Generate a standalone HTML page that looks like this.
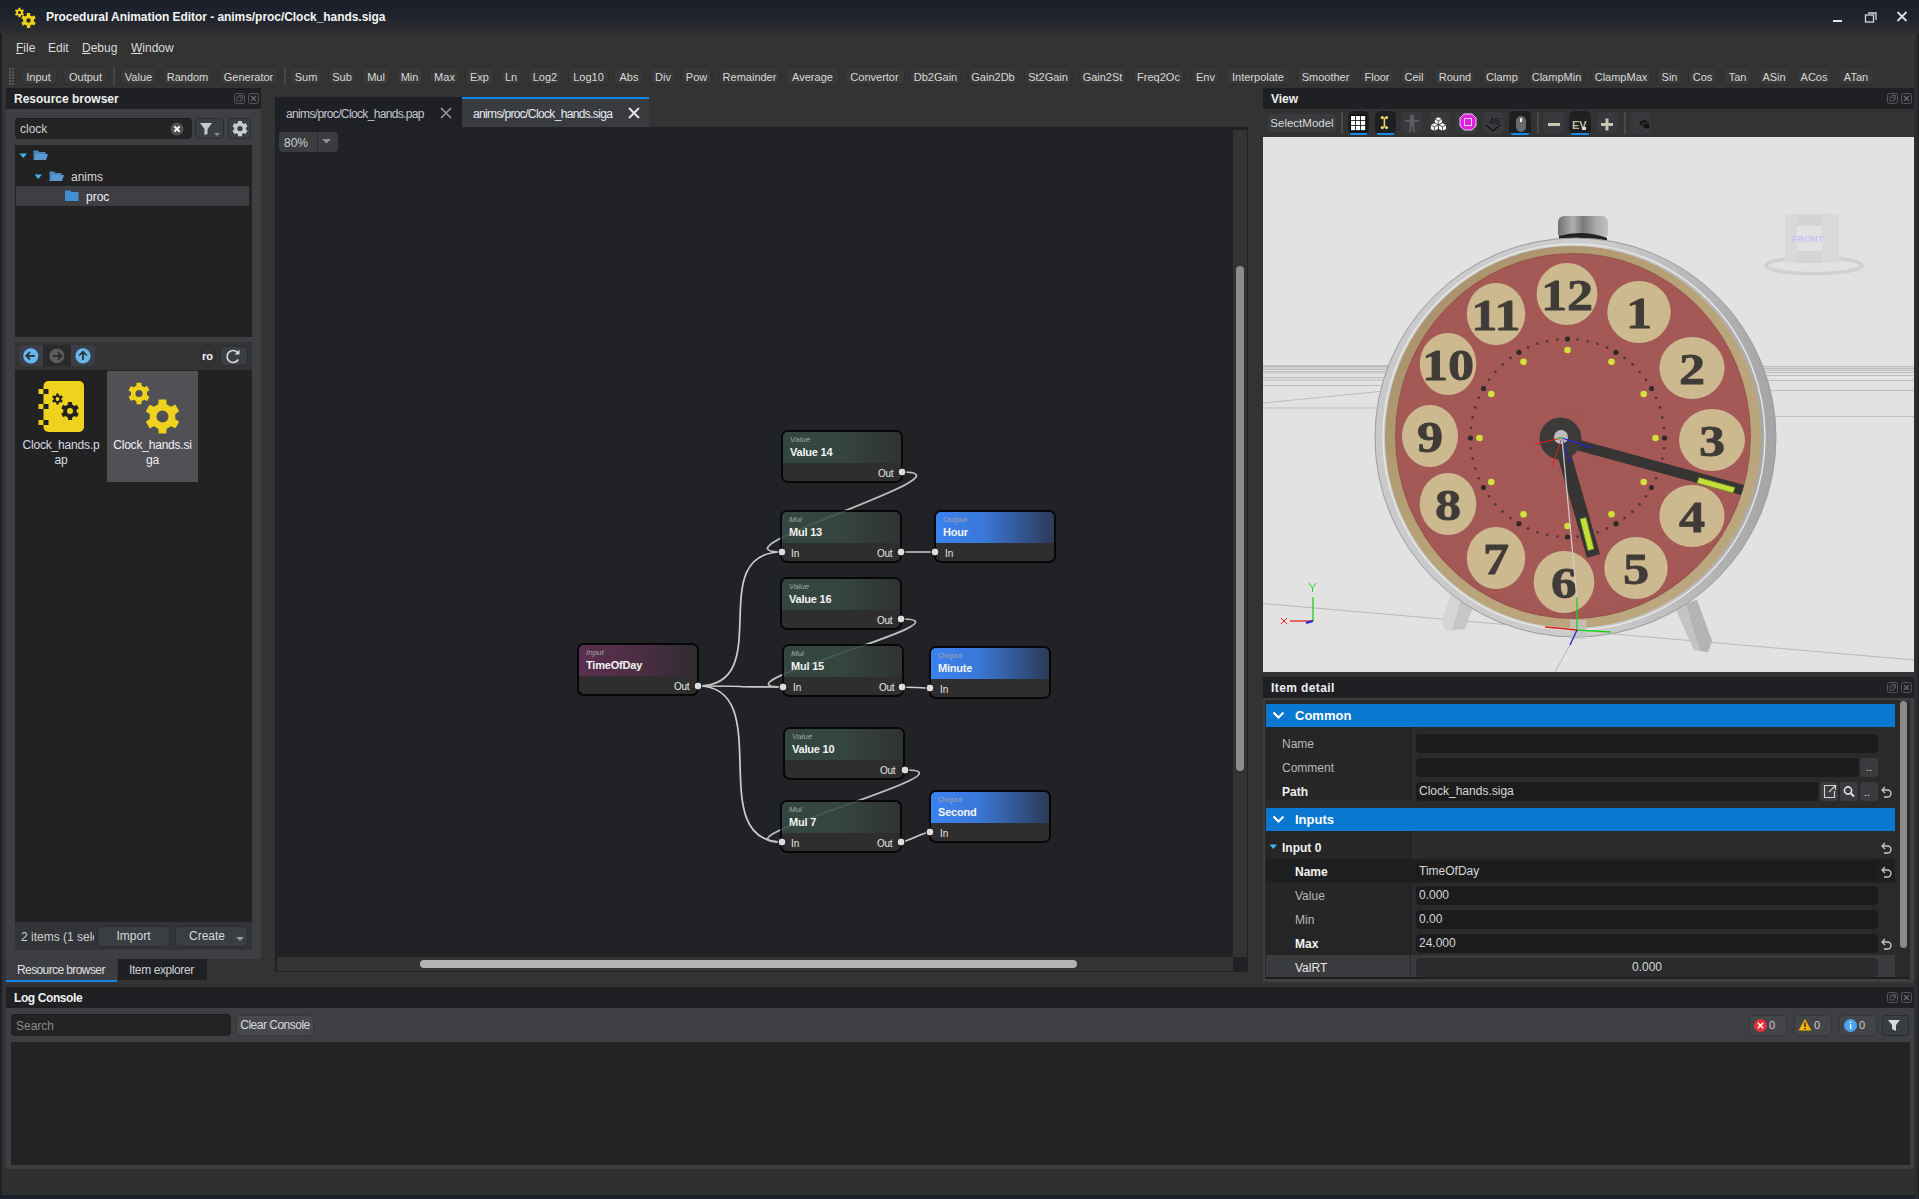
<!DOCTYPE html>
<html><head><meta charset="utf-8"><style>
*{box-sizing:border-box;margin:0;padding:0}
html,body{width:1919px;height:1199px;overflow:hidden;background:#333333;font-family:"Liberation Sans",sans-serif;font-size:12px;color:#d8d8d8}
.a{position:absolute}
.tbtn{position:absolute;top:67px;height:18px;border:1px solid #2e2e2e;border-radius:5px;background:#383838;color:#d9d9d9;font-size:11px;line-height:18px;text-align:center;white-space:nowrap;overflow:hidden}
</style></head><body>
<div class="a" style="left:0;top:0;width:1919px;height:33px;background:linear-gradient(180deg,#1b1f2a 0%,#1f232d 45%,#2c2d2e 100%)"></div>
<svg class="a" style="left:0;top:0" width="40" height="33"><path fill-rule="evenodd" fill="#f1d21b" d="M22.84,13.16 L24.09,13.92 L23.04,15.74 L21.76,15.04 L20.60,15.72 L20.56,17.18 L18.47,17.19 L18.43,15.73 L17.26,15.06 L15.98,15.76 L14.92,13.95 L16.17,13.18 L16.16,11.84 L14.91,11.08 L15.96,9.26 L17.24,9.96 L18.40,9.28 L18.44,7.82 L20.53,7.81 L20.57,9.27 L21.74,9.94 L23.02,9.24 L24.08,11.05 L22.83,11.82Z M21.00,12.50 A1.5,1.5 0 1 0 18.00,12.50 A1.5,1.5 0 1 0 21.00,12.50Z M33.80,21.55 L35.76,22.75 L34.11,25.62 L32.09,24.54 L30.24,25.61 L30.18,27.91 L26.87,27.92 L26.80,25.62 L24.94,24.56 L22.92,25.66 L21.26,22.80 L23.21,21.59 L23.20,19.45 L21.24,18.25 L22.89,15.38 L24.91,16.46 L26.76,15.39 L26.82,13.09 L30.13,13.08 L30.20,15.38 L32.06,16.44 L34.08,15.34 L35.74,18.20 L33.79,19.41Z M30.70,20.50 A2.2,2.2 0 1 0 26.30,20.50 A2.2,2.2 0 1 0 30.70,20.50Z"/></svg>
<div class="a" style="left:46px;top:10px;font-weight:bold;font-size:12px;color:#f4f4f4;white-space:nowrap;letter-spacing:-0.05px">Procedural Animation Editor - anims/proc/Clock_hands.siga</div>
<svg class="a" style="left:1826px;top:8px" width="85" height="20"><rect x="7" y="12" width="9" height="2" fill="#e8e8e8"/><rect x="39.5" y="7" width="8" height="7" fill="none" stroke="#d8d8d8" stroke-width="1.3"/><path d="M42,5 H50 V12" fill="none" stroke="#d8d8d8" stroke-width="1.3"/><path d="M71.5,4 L80.5,13 M80.5,4 L71.5,13" stroke="#e0e0e0" stroke-width="1.8"/></svg>
<div class="a" style="left:0;top:33px;width:2px;height:1166px;background:#1b202a"></div>
<div class="a" style="left:16px;top:41px;color:#dcdcdc;font-size:12px;white-space:nowrap"><u>F</u>ile</div>
<div class="a" style="left:48px;top:41px;color:#dcdcdc;font-size:12px;white-space:nowrap">Edit</div>
<div class="a" style="left:82px;top:41px;color:#dcdcdc;font-size:12px;white-space:nowrap"><u>D</u>ebug</div>
<div class="a" style="left:131px;top:41px;color:#dcdcdc;font-size:12px;white-space:nowrap"><u>W</u>indow</div>
<svg class="a" style="left:8px;top:67px" width="8" height="19"><rect x="1" y="1" width="2" height="2" fill="#5a5a5a"/><rect x="4" y="1" width="2" height="2" fill="#5a5a5a"/><rect x="1" y="4" width="2" height="2" fill="#5a5a5a"/><rect x="4" y="4" width="2" height="2" fill="#5a5a5a"/><rect x="1" y="7" width="2" height="2" fill="#5a5a5a"/><rect x="4" y="7" width="2" height="2" fill="#5a5a5a"/><rect x="1" y="10" width="2" height="2" fill="#5a5a5a"/><rect x="4" y="10" width="2" height="2" fill="#5a5a5a"/><rect x="1" y="13" width="2" height="2" fill="#5a5a5a"/><rect x="4" y="13" width="2" height="2" fill="#5a5a5a"/><rect x="1" y="16" width="2" height="2" fill="#5a5a5a"/><rect x="4" y="16" width="2" height="2" fill="#5a5a5a"/></svg>
<div class="tbtn" style="left:20px;width:37px">Input</div>
<div class="tbtn" style="left:63px;width:45px">Output</div>
<div class="tbtn" style="left:120px;width:37px">Value</div>
<div class="tbtn" style="left:163px;width:49px">Random</div>
<div class="tbtn" style="left:219px;width:59px">Generator</div>
<div class="tbtn" style="left:290px;width:32px">Sum</div>
<div class="tbtn" style="left:328px;width:28px">Sub</div>
<div class="tbtn" style="left:362px;width:28px">Mul</div>
<div class="tbtn" style="left:396px;width:27px">Min</div>
<div class="tbtn" style="left:429px;width:31px">Max</div>
<div class="tbtn" style="left:465px;width:29px">Exp</div>
<div class="tbtn" style="left:500px;width:22px">Ln</div>
<div class="tbtn" style="left:528px;width:34px">Log2</div>
<div class="tbtn" style="left:568px;width:41px">Log10</div>
<div class="tbtn" style="left:614px;width:30px">Abs</div>
<div class="tbtn" style="left:650px;width:26px">Div</div>
<div class="tbtn" style="left:681px;width:31px">Pow</div>
<div class="tbtn" style="left:719px;width:61px">Remainder</div>
<div class="tbtn" style="left:786px;width:53px">Average</div>
<div class="tbtn" style="left:844px;width:61px">Convertor</div>
<div class="tbtn" style="left:910px;width:51px">Db2Gain</div>
<div class="tbtn" style="left:968px;width:50px">Gain2Db</div>
<div class="tbtn" style="left:1024px;width:48px">St2Gain</div>
<div class="tbtn" style="left:1079px;width:47px">Gain2St</div>
<div class="tbtn" style="left:1133px;width:51px">Freq2Oc</div>
<div class="tbtn" style="left:1191px;width:29px">Env</div>
<div class="tbtn" style="left:1226px;width:64px">Interpolate</div>
<div class="tbtn" style="left:1297px;width:57px">Smoother</div>
<div class="tbtn" style="left:1360px;width:34px">Floor</div>
<div class="tbtn" style="left:1400px;width:28px">Ceil</div>
<div class="tbtn" style="left:1434px;width:42px">Round</div>
<div class="tbtn" style="left:1482px;width:40px">Clamp</div>
<div class="tbtn" style="left:1529px;width:55px">ClampMin</div>
<div class="tbtn" style="left:1591px;width:60px">ClampMax</div>
<div class="tbtn" style="left:1657px;width:25px">Sin</div>
<div class="tbtn" style="left:1688px;width:29px">Cos</div>
<div class="tbtn" style="left:1723px;width:29px">Tan</div>
<div class="tbtn" style="left:1758px;width:32px">ASin</div>
<div class="tbtn" style="left:1796px;width:36px">ACos</div>
<div class="tbtn" style="left:1838px;width:36px">ATan</div>
<div class="a" style="left:113px;top:67px;width:2px;height:19px;background:#464646"></div>
<div class="a" style="left:284px;top:67px;width:2px;height:19px;background:#464646"></div>
<div class="a" style="left:6px;top:88px;width:255px;height:21px;background:#1f2024"></div>
<div class="a" style="left:14px;top:92px;font-weight:bold;color:#f0f0f0;font-size:12px">Resource browser</div>
<svg class="a" style="left:234px;top:93px" width="26" height="12"><rect x="0.5" y="0.5" width="10" height="10" rx="2" fill="none" stroke="#55575c"/><rect x="3" y="4" width="4" height="4" fill="none" stroke="#55575c"/><path d="M4.5,2.5 H8.5 V6.5" fill="none" stroke="#55575c"/><rect x="14.5" y="0.5" width="10" height="10" rx="2" fill="none" stroke="#55575c"/><path d="M17,3 L22,8 M22,3 L17,8" stroke="#606268" stroke-width="1.6"/></svg>
<div class="a" style="left:6px;top:109px;width:255px;height:850px;background:#3e3f43"></div>
<div class="a" style="left:15px;top:118px;width:177px;height:21px;background:#232323;border-radius:4px;border-top:1px solid #1a1a1a"></div>
<div class="a" style="left:20px;top:122px;color:#d0d0d0;font-size:12px">clock</div>
<svg class="a" style="left:170px;top:122px" width="14" height="14"><circle cx="7" cy="7" r="6.5" fill="#505050"/><path d="M4.4,4.4 L9.6,9.6 M9.6,4.4 L4.4,9.6" stroke="#ffffff" stroke-width="2"/></svg>
<div class="a" style="left:195px;top:118px;width:29px;height:21px;background:#3b3f44;border:1px solid #2a2c2f;border-radius:4px"></div>
<svg class="a" style="left:199px;top:121px" width="24" height="16"><path d="M1,2 H13 L8.5,8 V13 L5.5,14 V8 Z" fill="#c8cacc"/><path d="M15,12 h6 l-3,3z" fill="#8a8c8f"/></svg>
<div class="a" style="left:228px;top:118px;width:23px;height:21px;background:#3b3f44;border:1px solid #2a2c2f;border-radius:4px"></div>
<svg class="a" style="left:0;top:0" width="260" height="150"><path fill-rule="evenodd" fill="#c8ccd2" d="M245.83,129.50 L247.54,130.59 L245.54,134.10 L243.73,133.17 L242.13,134.10 L242.05,136.13 L238.01,136.14 L237.91,134.12 L236.30,133.20 L234.50,134.14 L232.47,130.65 L234.18,129.54 L234.17,127.70 L232.46,126.61 L234.46,123.10 L236.27,124.03 L237.87,123.10 L237.95,121.07 L241.99,121.06 L242.09,123.08 L243.70,124.00 L245.50,123.06 L247.53,126.55 L245.82,127.66Z M242.70,128.60 A2.7,2.7 0 1 0 237.30,128.60 A2.7,2.7 0 1 0 242.70,128.60Z"/></svg>
<div class="a" style="left:15px;top:145px;width:237px;height:192px;background:#222222"></div>
<div class="a" style="left:16px;top:186px;width:233px;height:20px;background:#3e3f43"></div>
<svg class="a" style="left:19px;top:153px" width="10" height="7"><path d="M0.5,0.5 H8 L4.25,5 Z" fill="#3fb4f0"/></svg>
<svg class="a" style="left:33px;top:149px" width="16" height="12"><path d="M0.5,1.5 h4.5 l1.5,1.5 h6 v2 h-10 l-2,6 z" fill="#4b88bd"/><path d="M2.5,5 H15 L13,11 H0.5 Z" fill="#5a9ad0"/></svg>
<svg class="a" style="left:34px;top:174px" width="10" height="7"><path d="M0.5,0.5 H8 L4.25,5 Z" fill="#3fb4f0"/></svg>
<svg class="a" style="left:49px;top:170px" width="16" height="12"><path d="M0.5,1.5 h4.5 l1.5,1.5 h6 v2 h-10 l-2,6 z" fill="#4b88bd"/><path d="M2.5,5 H15 L13,11 H0.5 Z" fill="#5a9ad0"/></svg>
<div class="a" style="left:71px;top:170px;color:#d6d6d6;font-size:12px">anims</div>
<svg class="a" style="left:65px;top:190px" width="15" height="12"><path d="M0,0.5 h5 l1.5,1.5 h7 v9 h-13.5z" fill="#3f8fd2"/></svg>
<div class="a" style="left:86px;top:190px;color:#f0f0f0;font-size:12px">proc</div>
<div class="a" style="left:15px;top:342px;width:237px;height:28px;background:#333333"></div>
<div class="a" style="left:19px;top:345px;width:76px;height:21px;background:#2a2a2a;border-radius:4px;overflow:hidden"><div class="a" style="left:0;top:0;width:24px;height:21px;background:#3a3f47"></div><div class="a" style="left:52px;top:0;width:24px;height:21px;background:#3a3f47"></div></div>
<svg class="a" style="left:19px;top:345px" width="80" height="21"><circle cx="11.8" cy="10.8" r="7.6" fill="#6ab6ec"/><path d="M15.8,10.8 H7.8 M11,7 L7.3,10.8 L11,14.6" fill="none" stroke="#2b2b2b" stroke-width="1.7"/><circle cx="37.9" cy="10.8" r="7.4" fill="#5c5c5c"/><path d="M34,10.8 H42 M38.8,7 L42.5,10.8 L38.8,14.6" fill="none" stroke="#262626" stroke-width="1.7"/><circle cx="64" cy="10.8" r="7.6" fill="#6ab6ec"/><path d="M64,15 V7 M60.2,10.5 L64,6.7 L67.8,10.5" fill="none" stroke="#2b2b2b" stroke-width="1.7"/></svg>
<div class="a" style="left:201px;top:346px;width:14px;height:20px;background:#353535;border-radius:7px;border:1px solid #2a2a2a"></div>
<div class="a" style="left:202px;top:350px;color:#f0f0f0;font-size:11px;font-weight:bold">ro</div>
<div class="a" style="left:220px;top:346px;width:28px;height:20px;background:#3b3e44;border-radius:4px;border:1px solid #2c2d30"></div>
<svg class="a" style="left:225px;top:347px" width="18" height="18"><path d="M12.6,5.5 A6,6 0 1 0 13.3,12.5" fill="none" stroke="#d4d6d8" stroke-width="1.7"/><path d="M9.5,7.5 H14.5 V2.5 Z" fill="#d4d6d8"/></svg>
<div class="a" style="left:15px;top:370px;width:237px;height:552px;background:#222222"></div>
<div class="a" style="left:107px;top:371px;width:91px;height:111px;background:#505055"></div>
<svg class="a" style="left:0;top:0" width="200" height="440"><rect x="43.5" y="381" width="40.5" height="51" rx="5" fill="#eed21d"/><rect x="38.5" y="389" width="5" height="5" fill="#eed21d"/><rect x="43.5" y="389" width="5" height="5" fill="#222222"/><rect x="38.5" y="404" width="5" height="5" fill="#eed21d"/><rect x="43.5" y="404" width="5" height="5" fill="#222222"/><rect x="38.5" y="420" width="5" height="5" fill="#eed21d"/><rect x="43.5" y="420" width="5" height="5" fill="#222222"/><path fill-rule="evenodd" fill="#222222" d="M61.42,399.78 L62.85,400.66 L61.64,402.78 L60.16,401.99 L58.79,402.79 L58.74,404.46 L56.30,404.47 L56.24,402.80 L54.87,402.01 L53.39,402.81 L52.16,400.69 L53.58,399.80 L53.58,398.22 L52.15,397.34 L53.36,395.22 L54.84,396.01 L56.21,395.21 L56.26,393.54 L58.70,393.53 L58.76,395.20 L60.13,395.99 L61.61,395.19 L62.84,397.31 L61.42,398.20Z M59.40,399.00 A1.9,1.9 0 1 0 55.60,399.00 A1.9,1.9 0 1 0 59.40,399.00Z M76.67,412.32 L78.79,413.72 L76.79,417.20 L74.52,416.08 L72.19,417.44 L72.04,419.97 L68.03,419.99 L67.85,417.45 L65.52,416.12 L63.25,417.25 L61.23,413.78 L63.34,412.37 L63.33,409.68 L61.21,408.28 L63.21,404.80 L65.48,405.92 L67.81,404.56 L67.96,402.03 L71.97,402.01 L72.15,404.55 L74.48,405.88 L76.75,404.75 L78.77,408.22 L76.66,409.63Z M73.00,411.00 A3.0,3.0 0 1 0 67.00,411.00 A3.0,3.0 0 1 0 73.00,411.00Z"/><path fill-rule="evenodd" fill="#eed21d" d="M147.04,395.09 L149.51,396.75 L147.12,400.92 L144.44,399.63 L141.64,401.26 L141.44,404.23 L136.64,404.24 L136.41,401.28 L133.60,399.67 L130.93,400.97 L128.52,396.83 L130.97,395.15 L130.96,391.91 L128.49,390.25 L130.88,386.08 L133.56,387.37 L136.36,385.74 L136.56,382.77 L141.36,382.76 L141.59,385.72 L144.40,387.33 L147.07,386.03 L149.48,390.17 L147.03,391.85Z M142.60,393.50 A3.6,3.6 0 1 0 135.40,393.50 A3.6,3.6 0 1 0 142.60,393.50Z M175.25,419.02 L179.22,421.67 L175.42,428.30 L171.13,426.22 L166.69,428.81 L166.38,433.56 L158.74,433.59 L158.40,428.84 L153.94,426.28 L149.66,428.39 L145.82,421.79 L149.77,419.12 L149.75,413.98 L145.78,411.33 L149.58,404.70 L153.87,406.78 L158.31,404.19 L158.62,399.44 L166.26,399.41 L166.60,404.16 L171.06,406.72 L175.34,404.61 L179.18,411.21 L175.23,413.88Z M168.50,416.50 A6,6 0 1 0 156.50,416.50 A6,6 0 1 0 168.50,416.50Z"/></svg>
<div class="a" style="left:15px;top:438px;width:92px;text-align:center;color:#d8dce6;font-size:12px;line-height:15px;letter-spacing:-0.2px">Clock_hands.p<br>ap</div>
<div class="a" style="left:107px;top:438px;width:91px;text-align:center;color:#f2f2f6;font-size:12px;line-height:15px;letter-spacing:-0.2px">Clock_hands.si<br>ga</div>
<div class="a" style="left:15px;top:922px;width:237px;height:28px;background:#333437"></div>
<div class="a" style="left:21px;top:930px;width:73px;overflow:hidden;white-space:nowrap;color:#d0d0d0;font-size:12px">2 items (1 selected)</div>
<div class="a" style="left:97px;top:926px;width:73px;height:21px;background:#3a3d42;border:1px solid #2b2c2f;border-radius:4px;text-align:center;line-height:19px;color:#d8d8d8;font-size:12px">Import</div>
<div class="a" style="left:175px;top:926px;width:73px;height:21px;background:#3a3d42;border:1px solid #2b2c2f;border-radius:4px;color:#d8d8d8;font-size:12px;line-height:19px;padding-left:13px">Create</div>
<svg class="a" style="left:236px;top:937px" width="9" height="5"><path d="M0,0 H8 L4,4Z" fill="#9a9ca0"/></svg>
<div class="a" style="left:6px;top:959px;width:111px;height:21px;background:#3c3d41"></div>
<div class="a" style="left:17px;top:963px;color:#e0e0e0;font-size:12px;letter-spacing:-0.6px;white-space:nowrap">Resource browser</div>
<div class="a" style="left:6px;top:980px;width:111px;height:2px;background:#0f84e0"></div>
<div class="a" style="left:118px;top:959px;width:89px;height:21px;background:#1f2024"></div>
<div class="a" style="left:129px;top:963px;color:#d0d0d0;font-size:12px;letter-spacing:-0.4px;white-space:nowrap">Item explorer</div>
<div class="a" style="left:275px;top:97px;width:187px;height:30px;background:#1f2024"></div>
<div class="a" style="left:286px;top:107px;color:#c4c8d0;font-size:12px;white-space:nowrap;letter-spacing:-0.65px">anims/proc/Clock_hands.pap</div>
<svg class="a" style="left:440px;top:107px" width="12" height="12"><path d="M1,1 L11,11 M11,1 L1,11" stroke="#9a9a9a" stroke-width="1.6"/></svg>
<div class="a" style="left:462px;top:97px;width:187px;height:30px;background:#3a3b3f;border-top:2px solid #0f86e4"></div>
<div class="a" style="left:473px;top:107px;color:#e8ecf4;font-size:12px;white-space:nowrap;letter-spacing:-0.65px">anims/proc/Clock_hands.siga</div>
<svg class="a" style="left:628px;top:107px" width="12" height="12"><path d="M1,1 L11,11 M11,1 L1,11" stroke="#e8e8e8" stroke-width="1.8"/></svg>
<div class="a" style="left:275px;top:127px;width:973px;height:845px;background:#212226"></div>
<div class="a" style="left:279px;top:132px;width:59px;height:20px;background:#3a3c40;border-radius:4px"></div>
<div class="a" style="left:317px;top:132px;width:1px;height:20px;background:#2a2b2e"></div>
<div class="a" style="left:284px;top:136px;color:#d0d0d0;font-size:12px">80%</div>
<svg class="a" style="left:322px;top:139px" width="10" height="6"><path d="M0,0 H9 L4.5,4.5Z" fill="#8d8f93"/></svg>
<div class="a" style="left:1233px;top:130px;width:14px;height:827px;background:#333333"></div>
<div class="a" style="left:1236px;top:266px;width:8px;height:505px;background:#8c8c8c;border-radius:4px"></div>
<div class="a" style="left:277px;top:957px;width:956px;height:14px;background:#333333"></div>
<div class="a" style="left:420px;top:960px;width:657px;height:8px;background:#b4b4b4;border-radius:4px"></div>
<div class="a" style="left:1263px;top:88px;width:651px;height:21px;background:#1f2024"></div>
<div class="a" style="left:1271px;top:92px;font-weight:bold;color:#f0f0f0;font-size:12px">View</div>
<svg class="a" style="left:1887px;top:93px" width="26" height="12"><rect x="0.5" y="0.5" width="10" height="10" rx="2" fill="none" stroke="#55575c"/><rect x="3" y="4" width="4" height="4" fill="none" stroke="#55575c"/><path d="M4.5,2.5 H8.5 V6.5" fill="none" stroke="#55575c"/><rect x="14.5" y="0.5" width="10" height="10" rx="2" fill="none" stroke="#55575c"/><path d="M17,3 L22,8 M22,3 L17,8" stroke="#606268" stroke-width="1.6"/></svg>
<div class="a" style="left:1263px;top:109px;width:651px;height:28px;background:#333333"></div>
<div class="a" style="left:1268px;top:114px;width:68px;height:18px;background:#3a3b3e;border-radius:5px;color:#dadada;font-size:11.5px;line-height:18px;text-align:center">SelectModel</div>
<div class="a" style="left:1341px;top:112px;width:2px;height:22px;background:#4a4a4a"></div>
<div class="a" style="left:1537px;top:112px;width:2px;height:22px;background:#4a4a4a"></div>
<div class="a" style="left:1624px;top:112px;width:2px;height:22px;background:#4a4a4a"></div>
<div class="a" style="left:1348px;top:111px;width:21px;height:23px;background:#1e1f21;border-radius:5px"></div><div class="a" style="left:1350px;top:133px;width:17px;height:2px;background:#1a8ae8;border-radius:1px"></div>
<div class="a" style="left:1375px;top:111px;width:21px;height:23px;background:#1e1f21;border-radius:5px"></div><div class="a" style="left:1377px;top:133px;width:17px;height:2px;background:#1a8ae8;border-radius:1px"></div>
<div class="a" style="left:1402px;top:112px;width:21px;height:22px;background:#38393c;border-radius:5px"></div>
<div class="a" style="left:1429px;top:112px;width:21px;height:22px;background:#38393c;border-radius:5px"></div>
<div class="a" style="left:1456px;top:112px;width:21px;height:22px;background:#38393c;border-radius:5px"></div>
<div class="a" style="left:1483px;top:112px;width:21px;height:22px;background:#38393c;border-radius:5px"></div>
<div class="a" style="left:1509px;top:111px;width:22px;height:23px;background:#1e1f21;border-radius:5px"></div><div class="a" style="left:1511px;top:133px;width:18px;height:2px;background:#1a8ae8;border-radius:1px"></div>
<div class="a" style="left:1543px;top:112px;width:21px;height:22px;background:#38393c;border-radius:5px"></div>
<div class="a" style="left:1569px;top:111px;width:22px;height:23px;background:#1e1f21;border-radius:5px"></div><div class="a" style="left:1571px;top:133px;width:18px;height:2px;background:#1a8ae8;border-radius:1px"></div>
<div class="a" style="left:1597px;top:112px;width:21px;height:22px;background:#38393c;border-radius:5px"></div>
<div class="a" style="left:1630px;top:112px;width:21px;height:22px;background:#38393c;border-radius:5px"></div>
<svg class="a" style="left:1340px;top:108px" width="320" height="30"><rect x="10" y="7" width="16.5" height="16.5" rx="1.5" fill="#050505"/><rect x="11" y="8" width="4.2" height="4.2" fill="#ffffff"/><rect x="16" y="8" width="4.2" height="4.2" fill="#ffffff"/><rect x="21" y="8" width="4.2" height="4.2" fill="#ffffff"/><rect x="11" y="13" width="4.2" height="4.2" fill="#ffffff"/><rect x="16" y="13" width="4.2" height="4.2" fill="#ffffff"/><rect x="21" y="13" width="4.2" height="4.2" fill="#ffffff"/><rect x="11" y="18" width="4.2" height="4.2" fill="#ffffff"/><rect x="16" y="18" width="4.2" height="4.2" fill="#ffffff"/><rect x="21" y="18" width="4.2" height="4.2" fill="#ffffff"/><path d="M44.4,9.5 V19.5" stroke="#e8d070" stroke-width="1.6"/><circle cx="42.3" cy="9.6" r="1.6" fill="#e8d070"/><circle cx="46.5" cy="9.6" r="1.6" fill="#e8d070"/><circle cx="42.3" cy="19.6" r="1.6" fill="#e8d070"/><circle cx="46.5" cy="19.6" r="1.6" fill="#e8d070"/><circle cx="71.9" cy="8.8" r="2.2" fill="#5e5e5e"/><path d="M65,13 H79" stroke="#5e5e5e" stroke-width="1.8"/><rect x="69.6" y="10.5" width="4.6" height="8" fill="#5e5e5e"/><path d="M70.3,18 V23 M73.5,18 V23 M68.5,23 H71 M72.8,23 H75.3" stroke="#5e5e5e" stroke-width="1.6"/><path d="M98.4,8.8 L102.4,10.8 V15.3 L98.4,17.3 L94.4,15.3 V10.8 Z" fill="#f4f4f4" stroke="#1a1a1a" stroke-width="0.7"/><path d="M94.4,10.8 L98.4,12.8 L102.4,10.8 M98.4,12.8 V17.3" fill="none" stroke="#1a1a1a" stroke-width="0.7"/><path d="M94.4,14.8 L98.4,16.8 V21.3 L94.4,23.3 L90.4,21.3 V16.8 Z" fill="#f4f4f4" stroke="#1a1a1a" stroke-width="0.7"/><path d="M90.4,16.8 L94.4,18.8 L98.4,16.8 M94.4,18.8 V23.3" fill="none" stroke="#1a1a1a" stroke-width="0.7"/><path d="M102.5,14.8 L106.5,16.8 V21.3 L102.5,23.3 L98.5,21.3 V16.8 Z" fill="#f4f4f4" stroke="#1a1a1a" stroke-width="0.7"/><path d="M98.5,16.8 L102.5,18.8 L106.5,16.8 M102.5,18.8 V23.3" fill="none" stroke="#1a1a1a" stroke-width="0.7"/><path d="M120,10 L124,6 H132 L136,10 V18 L132,22 H124 L120,18 Z" fill="#e020e0" stroke="#f8c8f8" stroke-width="1"/><rect x="124.5" y="10.5" width="7" height="7" fill="none" stroke="#f8d0f8" stroke-width="1"/><text x="149" y="16" font-family="Liberation Sans" font-size="9.5" fill="#111">45</text><path d="M146,17 L153,23 L160,17" fill="none" stroke="#111" stroke-width="1.1"/><rect x="176" y="8" width="10" height="16" rx="5" fill="#6a6a6a"/><rect x="180" y="10" width="2" height="4" fill="#f0f0f0"/><rect x="208" y="15" width="12" height="3" fill="#c8c8b0"/><text x="232" y="21" font-family="Liberation Sans" font-weight="bold" font-size="11" fill="#bcbca4">EV</text><rect x="242" y="19" width="4" height="3" fill="#ddd"/><rect x="261" y="15" width="12" height="3" fill="#c8c8b0"/><rect x="265.5" y="10.5" width="3" height="12" fill="#c8c8b0"/><path d="M299,14 L305,12 L310,15 V21 H304 Z" fill="#111"/><rect x="303" y="15" width="7" height="6" fill="none" stroke="#444" stroke-width="1"/></svg>
<svg class="a" style="left:1263px;top:137px" width="651" height="535" viewBox="1263 137 651 535">
<defs><linearGradient id="bell" x1="0" x2="1" y1="0" y2="0"><stop offset="0" stop-color="#707070"/><stop offset="0.3" stop-color="#b0b0b0"/><stop offset="0.5" stop-color="#7a7a7a"/><stop offset="0.75" stop-color="#a8a8a8"/><stop offset="1" stop-color="#c0c0c0"/></linearGradient><linearGradient id="leg" x1="0" x2="1" y1="0" y2="0"><stop offset="0" stop-color="#7a7a7a"/><stop offset="0.5" stop-color="#cfcfcf"/><stop offset="1" stop-color="#8a8a8a"/></linearGradient><radialGradient id="face" cx="0.5" cy="0.45" r="0.6"><stop offset="0" stop-color="#a35856"/><stop offset="0.85" stop-color="#a45957"/><stop offset="1" stop-color="#9d5450"/></radialGradient><linearGradient id="rimg" x1="0" x2="1" y1="0" y2="0"><stop offset="0" stop-color="#c9c9c9"/><stop offset="0.55" stop-color="#cdcdcd"/><stop offset="0.8" stop-color="#b8b8b8"/><stop offset="1" stop-color="#a4a4a4"/></linearGradient><linearGradient id="brass" x1="0" x2="1" y1="0" y2="1"><stop offset="0" stop-color="#a58d68"/><stop offset="0.5" stop-color="#b9a47a"/><stop offset="1" stop-color="#bca880"/></linearGradient><filter id="blur1"><feGaussianBlur stdDeviation="0.6"/></filter></defs>
<rect x="1263" y="137" width="651" height="535" fill="#e2e2e2"/>
<line x1="1263" y1="366" x2="1400" y2="366" stroke="#bdbdbd" stroke-width="2"/>
<line x1="1263" y1="368" x2="1400" y2="368" stroke="#bdbdbd" stroke-width="1"/>
<line x1="1263" y1="369.5" x2="1400" y2="369.5" stroke="#bdbdbd" stroke-width="1"/>
<line x1="1263" y1="371.5" x2="1400" y2="371.5" stroke="#bdbdbd" stroke-width="1"/>
<line x1="1263" y1="373" x2="1400" y2="373" stroke="#bdbdbd" stroke-width="1"/>
<line x1="1263" y1="377.5" x2="1400" y2="377.5" stroke="#bdbdbd" stroke-width="1"/>
<line x1="1263" y1="380" x2="1400" y2="380" stroke="#bdbdbd" stroke-width="1"/>
<line x1="1263" y1="385.5" x2="1400" y2="385.5" stroke="#bdbdbd" stroke-width="1"/>
<line x1="1263" y1="408" x2="1400" y2="408" stroke="#bdbdbd" stroke-width="1"/>
<line x1="1263" y1="403" x2="1390" y2="390.5" stroke="#bdbdbd" stroke-width="1"/>
<line x1="1755" y1="366.5" x2="1914" y2="366.5" stroke="#bdbdbd" stroke-width="1"/>
<line x1="1755" y1="368.5" x2="1914" y2="368.5" stroke="#bdbdbd" stroke-width="1.5"/>
<line x1="1755" y1="370.5" x2="1914" y2="370.5" stroke="#bdbdbd" stroke-width="1"/>
<line x1="1755" y1="372.5" x2="1914" y2="372.5" stroke="#bdbdbd" stroke-width="1"/>
<line x1="1755" y1="375.5" x2="1914" y2="375.5" stroke="#bdbdbd" stroke-width="1"/>
<line x1="1755" y1="380.5" x2="1914" y2="380.5" stroke="#bdbdbd" stroke-width="1"/>
<line x1="1755" y1="390.5" x2="1914" y2="390.5" stroke="#bdbdbd" stroke-width="1"/>
<line x1="1755" y1="416.5" x2="1914" y2="416.5" stroke="#bdbdbd" stroke-width="1"/>
<line x1="1263" y1="603.5" x2="1914" y2="660" stroke="#b8b8b8" stroke-width="1"/>
<ellipse cx="1814" cy="265.5" rx="48" ry="8" fill="none" stroke="#d0d0d0" stroke-width="3.5"/>
<rect x="1785" y="214" width="54" height="49" fill="#d9d9d9"/>
<rect x="1797" y="214" width="25" height="49" fill="#d4d4d4"/>
<rect x="1797" y="226" width="25" height="25" fill="#e2e2e2"/>
<text x="1792" y="242" font-family="Liberation Sans" font-weight="bold" font-size="9" fill="#c4c4f2">FRONT</text>
<path d="M1452,591 L1474,604 L1465,629 L1447,631 L1442,622 Z" fill="#c6c6c6"/>
<path d="M1452,591 L1462,597 L1452,630 L1447,631 L1442,622 Z" fill="#d6d6d6"/>
<path d="M1674,606 L1697,600 L1712,641 L1708,652 L1694,650 Z" fill="#c4c4c4"/>
<path d="M1697,600 L1712,641 L1708,652 L1700,651 L1686,604 Z" fill="#b4b4b4"/>
<rect x="1558" y="216" width="50" height="23" rx="6" fill="url(#bell)"/>
<path d="M1559,236 Q1583,229 1607,238 L1607,240 L1559,240 Z" fill="#222"/>
<ellipse cx="1575.5" cy="437.5" rx="200.5" ry="199.5" fill="url(#rimg)" stroke="#9c9c9c" stroke-width="1"/>
<ellipse cx="1574" cy="437" rx="191" ry="193" fill="none" stroke="#e6e6e6" stroke-width="1.5"/>
<ellipse cx="1573" cy="437" rx="188" ry="191" fill="url(#brass)"/>
<ellipse cx="1573" cy="436" rx="177.5" ry="182.5" fill="url(#face)" stroke="#8f4a44" stroke-width="0.8"/>
<circle cx="1567.5" cy="339.0" r="2.6" fill="#2e2a28"/>
<circle cx="1567.5" cy="350.0" r="3.3" fill="#d2e23a"/>
<circle cx="1577.6" cy="339.5" r="1.3" fill="#4a3432"/>
<circle cx="1587.7" cy="341.2" r="1.3" fill="#4a3432"/>
<circle cx="1597.5" cy="343.8" r="1.3" fill="#4a3432"/>
<circle cx="1607.0" cy="347.6" r="1.3" fill="#4a3432"/>
<circle cx="1616.0" cy="352.3" r="2.6" fill="#2e2a28"/>
<circle cx="1611.5" cy="361.8" r="3.3" fill="#d2e23a"/>
<circle cx="1624.5" cy="357.9" r="1.3" fill="#4a3432"/>
<circle cx="1632.4" cy="364.4" r="1.3" fill="#4a3432"/>
<circle cx="1639.6" cy="371.8" r="1.3" fill="#4a3432"/>
<circle cx="1646.0" cy="379.8" r="1.3" fill="#4a3432"/>
<circle cx="1651.5" cy="388.5" r="2.6" fill="#2e2a28"/>
<circle cx="1643.7" cy="394.0" r="3.3" fill="#d2e23a"/>
<circle cx="1656.1" cy="397.7" r="1.3" fill="#4a3432"/>
<circle cx="1659.8" cy="407.4" r="1.3" fill="#4a3432"/>
<circle cx="1662.4" cy="417.4" r="1.3" fill="#4a3432"/>
<circle cx="1664.0" cy="427.7" r="1.3" fill="#4a3432"/>
<circle cx="1664.5" cy="438.0" r="2.6" fill="#2e2a28"/>
<circle cx="1655.5" cy="438.0" r="3.3" fill="#d2e23a"/>
<circle cx="1664.0" cy="448.3" r="1.3" fill="#4a3432"/>
<circle cx="1662.4" cy="458.6" r="1.3" fill="#4a3432"/>
<circle cx="1659.8" cy="468.6" r="1.3" fill="#4a3432"/>
<circle cx="1656.1" cy="478.3" r="1.3" fill="#4a3432"/>
<circle cx="1651.5" cy="487.5" r="2.6" fill="#2e2a28"/>
<circle cx="1643.7" cy="482.0" r="3.3" fill="#d2e23a"/>
<circle cx="1646.0" cy="496.2" r="1.3" fill="#4a3432"/>
<circle cx="1639.6" cy="504.2" r="1.3" fill="#4a3432"/>
<circle cx="1632.4" cy="511.6" r="1.3" fill="#4a3432"/>
<circle cx="1624.5" cy="518.1" r="1.3" fill="#4a3432"/>
<circle cx="1616.0" cy="523.7" r="2.6" fill="#2e2a28"/>
<circle cx="1611.5" cy="514.2" r="3.3" fill="#d2e23a"/>
<circle cx="1607.0" cy="528.4" r="1.3" fill="#4a3432"/>
<circle cx="1597.5" cy="532.2" r="1.3" fill="#4a3432"/>
<circle cx="1587.7" cy="534.8" r="1.3" fill="#4a3432"/>
<circle cx="1577.6" cy="536.5" r="1.3" fill="#4a3432"/>
<circle cx="1567.5" cy="537.0" r="2.6" fill="#2e2a28"/>
<circle cx="1567.5" cy="526.0" r="3.3" fill="#d2e23a"/>
<circle cx="1557.4" cy="536.5" r="1.3" fill="#4a3432"/>
<circle cx="1547.3" cy="534.8" r="1.3" fill="#4a3432"/>
<circle cx="1537.5" cy="532.2" r="1.3" fill="#4a3432"/>
<circle cx="1528.0" cy="528.4" r="1.3" fill="#4a3432"/>
<circle cx="1519.0" cy="523.7" r="2.6" fill="#2e2a28"/>
<circle cx="1523.5" cy="514.2" r="3.3" fill="#d2e23a"/>
<circle cx="1510.5" cy="518.1" r="1.3" fill="#4a3432"/>
<circle cx="1502.6" cy="511.6" r="1.3" fill="#4a3432"/>
<circle cx="1495.4" cy="504.2" r="1.3" fill="#4a3432"/>
<circle cx="1489.0" cy="496.2" r="1.3" fill="#4a3432"/>
<circle cx="1483.5" cy="487.5" r="2.6" fill="#2e2a28"/>
<circle cx="1491.3" cy="482.0" r="3.3" fill="#d2e23a"/>
<circle cx="1478.9" cy="478.3" r="1.3" fill="#4a3432"/>
<circle cx="1475.2" cy="468.6" r="1.3" fill="#4a3432"/>
<circle cx="1472.6" cy="458.6" r="1.3" fill="#4a3432"/>
<circle cx="1471.0" cy="448.3" r="1.3" fill="#4a3432"/>
<circle cx="1470.5" cy="438.0" r="2.6" fill="#2e2a28"/>
<circle cx="1479.5" cy="438.0" r="3.3" fill="#d2e23a"/>
<circle cx="1471.0" cy="427.7" r="1.3" fill="#4a3432"/>
<circle cx="1472.6" cy="417.4" r="1.3" fill="#4a3432"/>
<circle cx="1475.2" cy="407.4" r="1.3" fill="#4a3432"/>
<circle cx="1478.9" cy="397.7" r="1.3" fill="#4a3432"/>
<circle cx="1483.5" cy="388.5" r="2.6" fill="#2e2a28"/>
<circle cx="1491.3" cy="394.0" r="3.3" fill="#d2e23a"/>
<circle cx="1489.0" cy="379.8" r="1.3" fill="#4a3432"/>
<circle cx="1495.4" cy="371.8" r="1.3" fill="#4a3432"/>
<circle cx="1502.6" cy="364.4" r="1.3" fill="#4a3432"/>
<circle cx="1510.5" cy="357.9" r="1.3" fill="#4a3432"/>
<circle cx="1519.0" cy="352.3" r="2.6" fill="#2e2a28"/>
<circle cx="1523.5" cy="361.8" r="3.3" fill="#d2e23a"/>
<circle cx="1528.0" cy="347.6" r="1.3" fill="#4a3432"/>
<circle cx="1537.5" cy="343.8" r="1.3" fill="#4a3432"/>
<circle cx="1547.3" cy="341.2" r="1.3" fill="#4a3432"/>
<circle cx="1557.4" cy="339.5" r="1.3" fill="#4a3432"/>
<ellipse cx="1567" cy="294" rx="30.4" ry="31" fill="#cdb98f"/>
<text transform="translate(1567,309.5) scale(1.16,1)" x="0" y="0" text-anchor="middle" font-family="Liberation Serif" font-weight="bold" font-size="45" fill="#403b37" stroke="#403b37" stroke-width="0.8" stroke-linejoin="round" filter="url(#blur1)">12</text>
<ellipse cx="1639" cy="312" rx="31.7" ry="31" fill="#cdb98f"/>
<text transform="translate(1639,327.5) scale(1.16,1)" x="0" y="0" text-anchor="middle" font-family="Liberation Serif" font-weight="bold" font-size="45" fill="#403b37" stroke="#403b37" stroke-width="0.8" stroke-linejoin="round" filter="url(#blur1)">1</text>
<ellipse cx="1692" cy="368" rx="32.6" ry="31" fill="#cdb98f"/>
<text transform="translate(1692,383.5) scale(1.16,1)" x="0" y="0" text-anchor="middle" font-family="Liberation Serif" font-weight="bold" font-size="45" fill="#403b37" stroke="#403b37" stroke-width="0.8" stroke-linejoin="round" filter="url(#blur1)">2</text>
<ellipse cx="1712" cy="440" rx="33.0" ry="31" fill="#cdb98f"/>
<text transform="translate(1712,455.5) scale(1.16,1)" x="0" y="0" text-anchor="middle" font-family="Liberation Serif" font-weight="bold" font-size="45" fill="#403b37" stroke="#403b37" stroke-width="0.8" stroke-linejoin="round" filter="url(#blur1)">3</text>
<ellipse cx="1692" cy="516" rx="32.6" ry="31" fill="#cdb98f"/>
<text transform="translate(1692,531.5) scale(1.16,1)" x="0" y="0" text-anchor="middle" font-family="Liberation Serif" font-weight="bold" font-size="45" fill="#403b37" stroke="#403b37" stroke-width="0.8" stroke-linejoin="round" filter="url(#blur1)">4</text>
<ellipse cx="1636" cy="568" rx="31.7" ry="31" fill="#cdb98f"/>
<text transform="translate(1636,583.5) scale(1.16,1)" x="0" y="0" text-anchor="middle" font-family="Liberation Serif" font-weight="bold" font-size="45" fill="#403b37" stroke="#403b37" stroke-width="0.8" stroke-linejoin="round" filter="url(#blur1)">5</text>
<ellipse cx="1564" cy="582" rx="30.4" ry="31" fill="#cdb98f"/>
<text transform="translate(1564,597.5) scale(1.16,1)" x="0" y="0" text-anchor="middle" font-family="Liberation Serif" font-weight="bold" font-size="45" fill="#403b37" stroke="#403b37" stroke-width="0.8" stroke-linejoin="round" filter="url(#blur1)">6</text>
<ellipse cx="1496" cy="558" rx="29.2" ry="31" fill="#cdb98f"/>
<text transform="translate(1496,573.5) scale(1.16,1)" x="0" y="0" text-anchor="middle" font-family="Liberation Serif" font-weight="bold" font-size="45" fill="#403b37" stroke="#403b37" stroke-width="0.8" stroke-linejoin="round" filter="url(#blur1)">7</text>
<ellipse cx="1448" cy="504" rx="28.3" ry="31" fill="#cdb98f"/>
<text transform="translate(1448,519.5) scale(1.16,1)" x="0" y="0" text-anchor="middle" font-family="Liberation Serif" font-weight="bold" font-size="45" fill="#403b37" stroke="#403b37" stroke-width="0.8" stroke-linejoin="round" filter="url(#blur1)">8</text>
<ellipse cx="1430" cy="436" rx="28.0" ry="31" fill="#cdb98f"/>
<text transform="translate(1430,451.5) scale(1.16,1)" x="0" y="0" text-anchor="middle" font-family="Liberation Serif" font-weight="bold" font-size="45" fill="#403b37" stroke="#403b37" stroke-width="0.8" stroke-linejoin="round" filter="url(#blur1)">9</text>
<ellipse cx="1448" cy="364" rx="28.3" ry="31" fill="#cdb98f"/>
<text transform="translate(1448,379.5) scale(1.16,1)" x="0" y="0" text-anchor="middle" font-family="Liberation Serif" font-weight="bold" font-size="45" fill="#403b37" stroke="#403b37" stroke-width="0.8" stroke-linejoin="round" filter="url(#blur1)">10</text>
<ellipse cx="1496" cy="314" rx="29.2" ry="31" fill="#cdb98f"/>
<text transform="translate(1496,329.5) scale(1.16,1)" x="0" y="0" text-anchor="middle" font-family="Liberation Serif" font-weight="bold" font-size="45" fill="#403b37" stroke="#403b37" stroke-width="0.8" stroke-linejoin="round" filter="url(#blur1)">11</text>
<path d="M1558,434 L1744,485 L1741,495 L1554,444 Z" fill="#363534"/>
<path d="M1699,477.5 L1735,487.5 L1733,493 L1697,483 Z" fill="#c6de3a" stroke="#6a8a2a" stroke-width="0.8"/>
<path d="M1553,440 L1566,436 L1600,554 L1587,558 Z" fill="#363534"/>
<path d="M1580,519 L1586,517.5 L1594,549 L1588,550.5 Z" fill="#c6de3a" stroke="#6a8a2a" stroke-width="0.8"/>
<circle cx="1560.5" cy="438.5" r="21" fill="#3d3b3a"/>
<circle cx="1561" cy="437" r="7" fill="#bdbdbd"/>
<line x1="1562" y1="438" x2="1535" y2="444" stroke="#e02020" stroke-width="1.2"/>
<line x1="1562" y1="438" x2="1552" y2="466" stroke="#e02020" stroke-width="1"/>
<line x1="1562" y1="438" x2="1592" y2="448" stroke="#2020e0" stroke-width="1.2"/>
<line x1="1562" y1="438" x2="1570" y2="463" stroke="#2020e0" stroke-width="1"/>
<line x1="1562" y1="438" x2="1558" y2="438" stroke="#20d020" stroke-width="1.5"/>
<line x1="1562" y1="438" x2="1577" y2="600" stroke="#d0d0d0" stroke-width="1.2"/>
<line x1="1570" y1="645" x2="1555" y2="672" stroke="#b8b8b8" stroke-width="1"/>
<rect x="1570" y="620" width="16" height="19" fill="#c4c4c4" fill-opacity="0.8"/>
<line x1="1577" y1="630" x2="1577" y2="597" stroke="#20d020" stroke-width="1.3"/>
<line x1="1577" y1="630" x2="1611" y2="632" stroke="#20d020" stroke-width="1.3"/>
<line x1="1577" y1="630" x2="1545" y2="627" stroke="#e02020" stroke-width="1.3"/>
<line x1="1577" y1="630" x2="1570" y2="645" stroke="#2020e0" stroke-width="1.3"/>
<line x1="1313" y1="621" x2="1313" y2="597" stroke="#20d020" stroke-width="1.3"/>
<path d="M1309,583 L1312.5,588 L1316,583 M1312.5,588 V592" stroke="#20d020" fill="none" stroke-width="1"/>
<line x1="1313" y1="621" x2="1290" y2="621" stroke="#e02020" stroke-width="1.3"/>
<path d="M1281,618 L1287,624 M1287,618 L1281,624" stroke="#e02020" stroke-width="1"/>
<line x1="1313" y1="621" x2="1306" y2="623" stroke="#2020e0" stroke-width="2"/>
</svg>
<div class="a" style="left:1263px;top:677px;width:651px;height:21px;background:#1f2024"></div>
<div class="a" style="left:1271px;top:681px;font-weight:bold;color:#f0f0f0;font-size:12px;letter-spacing:0.4px">Item detail</div>
<svg class="a" style="left:1887px;top:682px" width="26" height="12"><rect x="0.5" y="0.5" width="10" height="10" rx="2" fill="none" stroke="#55575c"/><rect x="3" y="4" width="4" height="4" fill="none" stroke="#55575c"/><path d="M4.5,2.5 H8.5 V6.5" fill="none" stroke="#55575c"/><rect x="14.5" y="0.5" width="10" height="10" rx="2" fill="none" stroke="#55575c"/><path d="M17,3 L22,8 M22,3 L17,8" stroke="#606268" stroke-width="1.6"/></svg>
<div class="a" style="left:1263px;top:698px;width:651px;height:284px;background:#3e3f43"></div>
<div class="a" style="left:1265px;top:700px;width:634px;height:277px;background:#2a2a2b"></div>
<div class="a" style="left:1266px;top:704px;width:629px;height:23px;background:#0a78d0"></div><svg class="a" style="left:1272px;top:711px" width="14" height="10"><path d="M1.5,1.5 L6.5,6.5 L11.5,1.5" fill="none" stroke="#fff" stroke-width="2"/></svg><div class="a" style="left:1295px;top:708px;color:#fff;font-weight:bold;font-size:13px">Common</div>
<div class="a" style="left:1266px;top:727px;width:144px;height:73px;background:#262627"></div>
<div class="a" style="left:1410px;top:727px;width:1px;height:73px;background:#1c1c1d"></div>
<div class="a" style="left:1282px;top:737px;color:#b8b8b8;font-size:12px">Name</div>
<div class="a" style="left:1416px;top:734px;width:462px;height:19px;background:#1c1c1d;border-radius:4px;color:#d8d8d8;font-size:12px;line-height:19px;padding-left:3px;"></div>
<div class="a" style="left:1282px;top:761px;color:#b8b8b8;font-size:12px">Comment</div>
<div class="a" style="left:1416px;top:758px;width:443px;height:19px;background:#1c1c1d;border-radius:4px;color:#d8d8d8;font-size:12px;line-height:19px;padding-left:3px;"></div>
<div class="a" style="left:1860px;top:758px;width:18px;height:19px;background:#3a3b3e;border-radius:3px;color:#ddd;font-size:11px;text-align:center;line-height:19px">..</div>
<div class="a" style="left:1282px;top:785px;color:#f0f0f0;font-size:12px;font-weight:bold">Path</div>
<div class="a" style="left:1416px;top:782px;width:402px;height:19px;background:#1c1c1d;border-radius:4px;color:#d8d8d8;font-size:12px;line-height:19px;padding-left:3px;">Clock_hands.siga</div>
<div class="a" style="left:1820px;top:782px;width:18px;height:19px;background:#3a3b3e;border-radius:3px"></div>
<div class="a" style="left:1840px;top:782px;width:18px;height:19px;background:#3a3b3e;border-radius:3px"></div>
<div class="a" style="left:1860px;top:782px;width:18px;height:19px;background:#3a3b3e;border-radius:3px"></div>
<svg class="a" style="left:1820px;top:782px" width="80" height="20"><path d="M12,3.5 H4.5 V15.5 H14.5 V9" fill="none" stroke="#d0d0d0" stroke-width="1.2"/><path d="M9,10 L15,4 M11,3.5 H15.5 V8" fill="none" stroke="#d0d0d0" stroke-width="1.2"/><circle cx="28" cy="8.5" r="3.6" fill="none" stroke="#e0e0e0" stroke-width="1.6"/><path d="M30.5,11 L34,14.5" stroke="#e0e0e0" stroke-width="2"/><text x="44" y="14" font-family="Liberation Sans" font-size="11" fill="#ddd">..</text></svg>
<svg class="a" style="left:1879px;top:785px" width="14" height="14"><path d="M4,5 H8.5 A3.5,3.5 0 0 1 8.5,12 H5" fill="none" stroke="#c8c8c8" stroke-width="1.3"/><path d="M6,2 L3,5 L6,8" fill="none" stroke="#c8c8c8" stroke-width="1.3"/></svg>
<div class="a" style="left:1266px;top:808px;width:629px;height:23px;background:#0a78d0"></div><svg class="a" style="left:1272px;top:815px" width="14" height="10"><path d="M1.5,1.5 L6.5,6.5 L11.5,1.5" fill="none" stroke="#fff" stroke-width="2"/></svg><div class="a" style="left:1295px;top:812px;color:#fff;font-weight:bold;font-size:13px">Inputs</div>
<div class="a" style="left:1266px;top:831px;width:144px;height:147px;background:#262627"></div>
<div class="a" style="left:1410px;top:831px;width:1px;height:147px;background:#1c1c1d"></div>
<svg class="a" style="left:1269px;top:844px" width="10" height="7"><path d="M0.5,0.5 H8 L4.25,5 Z" fill="#3fb4f0"/></svg>
<div class="a" style="left:1282px;top:841px;color:#f0f0f0;font-size:12px;font-weight:bold">Input 0</div>
<svg class="a" style="left:1879px;top:841px" width="14" height="14"><path d="M4,5 H8.5 A3.5,3.5 0 0 1 8.5,12 H5" fill="none" stroke="#c8c8c8" stroke-width="1.3"/><path d="M6,2 L3,5 L6,8" fill="none" stroke="#c8c8c8" stroke-width="1.3"/></svg>
<div class="a" style="left:1266px;top:859px;width:629px;height:24px;background:#1e1f21"></div>
<div class="a" style="left:1295px;top:865px;color:#f4f4f4;font-size:12px;font-weight:bold">Name</div>
<div class="a" style="left:1416px;top:862px;width:462px;height:19px;background:#1c1c1d;border-radius:4px;color:#d8d8d8;font-size:12px;line-height:19px;padding-left:3px;">TimeOfDay</div>
<svg class="a" style="left:1879px;top:865px" width="14" height="14"><path d="M4,5 H8.5 A3.5,3.5 0 0 1 8.5,12 H5" fill="none" stroke="#c8c8c8" stroke-width="1.3"/><path d="M6,2 L3,5 L6,8" fill="none" stroke="#c8c8c8" stroke-width="1.3"/></svg>
<div class="a" style="left:1295px;top:889px;color:#b8b8b8;font-size:12px">Value</div>
<div class="a" style="left:1416px;top:886px;width:462px;height:19px;background:#1c1c1d;border-radius:4px;color:#d8d8d8;font-size:12px;line-height:19px;padding-left:3px;">0.000</div>
<div class="a" style="left:1295px;top:913px;color:#b8b8b8;font-size:12px">Min</div>
<div class="a" style="left:1416px;top:910px;width:462px;height:19px;background:#1c1c1d;border-radius:4px;color:#d8d8d8;font-size:12px;line-height:19px;padding-left:3px;">0.00</div>
<div class="a" style="left:1295px;top:937px;color:#f4f4f4;font-size:12px;font-weight:bold">Max</div>
<div class="a" style="left:1416px;top:934px;width:462px;height:19px;background:#1c1c1d;border-radius:4px;color:#d8d8d8;font-size:12px;line-height:19px;padding-left:3px;">24.000</div>
<svg class="a" style="left:1879px;top:937px" width="14" height="14"><path d="M4,5 H8.5 A3.5,3.5 0 0 1 8.5,12 H5" fill="none" stroke="#c8c8c8" stroke-width="1.3"/><path d="M6,2 L3,5 L6,8" fill="none" stroke="#c8c8c8" stroke-width="1.3"/></svg>
<div class="a" style="left:1266px;top:955px;width:629px;height:23px;background:#3a3b3f"></div>
<div class="a" style="left:1295px;top:961px;color:#e8e8e8;font-size:12px">ValRT</div>
<div class="a" style="left:1410px;top:955px;width:1px;height:23px;background:#2a2a2b"></div>
<div class="a" style="left:1416px;top:958px;width:462px;height:19px;background:#2a2b2d;border-radius:4px;color:#d8d8d8;font-size:12px;line-height:19px;text-align:center;">0.000</div>
<div class="a" style="left:1265px;top:977px;width:645px;height:2px;background:#1e1e1f"></div>
<div class="a" style="left:1898px;top:701px;width:12px;height:276px;background:#2a2a2b"></div>
<div class="a" style="left:1900px;top:701px;width:7px;height:247px;background:#8a8a8a;border-radius:4px"></div>
<svg class="a" style="left:0;top:0" width="1248" height="972"><path d="M698,686 C778,686 702,552 782,552" fill="none" stroke="#cdcdcd" stroke-width="1.7"/><path d="M698,686 C778,686 703,687 783,687" fill="none" stroke="#cdcdcd" stroke-width="1.7"/><path d="M698,686 C778,686 702,842 782,842" fill="none" stroke="#cdcdcd" stroke-width="1.7"/><path d="M902,472 C982,472 702,552 782,552" fill="none" stroke="#cdcdcd" stroke-width="1.7"/><path d="M901,552 C907.8,552 928.2,552 935,552" fill="none" stroke="#cdcdcd" stroke-width="1.7"/><path d="M901,619 C981,619 703,687 783,687" fill="none" stroke="#cdcdcd" stroke-width="1.7"/><path d="M902,687 C907.6,687 924.4,688 930,688" fill="none" stroke="#cdcdcd" stroke-width="1.7"/><path d="M905,770 C985,770 702,842 782,842" fill="none" stroke="#cdcdcd" stroke-width="1.7"/><path d="M901,842 C906.8,842 924.2,832 930,832" fill="none" stroke="#cdcdcd" stroke-width="1.7"/></svg>
<div class="a" style="left:781px;top:430px;width:122px;height:53px;background:#2e2e2e;border:2px solid #070707;border-radius:7px;overflow:hidden"><div class="a" style="left:0;top:0;width:100%;height:31px;background:linear-gradient(90deg,#34463f 0%,#354640 45%,#2f3331 100%)"></div></div>
<div class="a" style="left:790px;top:435px;color:#a0a8a0;font-size:8px;font-style:italic">Value</div>
<div class="a" style="left:790px;top:446px;color:#f4f4f4;font-size:11px;font-weight:bold;letter-spacing:-0.2px">Value 14</div>
<div class="a" style="left:878px;top:468px;color:#e6e6e6;font-size:10px;letter-spacing:-0.3px">Out</div>
<div class="a" style="left:780px;top:510px;width:122px;height:53px;background:#2e2e2e;border:2px solid #070707;border-radius:7px;overflow:hidden"><div class="a" style="left:0;top:0;width:100%;height:31px;background:linear-gradient(90deg,#34463f 0%,#354640 45%,#2f3331 100%)"></div></div>
<div class="a" style="left:789px;top:515px;color:#a0a8a0;font-size:8px;font-style:italic">Mul</div>
<div class="a" style="left:789px;top:526px;color:#f4f4f4;font-size:11px;font-weight:bold;letter-spacing:-0.2px">Mul 13</div>
<div class="a" style="left:791px;top:548px;color:#e6e6e6;font-size:10px">In</div>
<div class="a" style="left:877px;top:548px;color:#e6e6e6;font-size:10px;letter-spacing:-0.3px">Out</div>
<div class="a" style="left:934px;top:510px;width:122px;height:53px;background:#2e2e2e;border:2px solid #070707;border-radius:7px;overflow:hidden"><div class="a" style="left:0;top:0;width:100%;height:31px;background:linear-gradient(90deg,#3b82f0 0%,#3a78d8 40%,#2c3a55 100%)"></div></div>
<div class="a" style="left:943px;top:515px;color:#a0a8a0;font-size:8px;font-style:italic">Output</div>
<div class="a" style="left:943px;top:526px;color:#f4f4f4;font-size:11px;font-weight:bold;letter-spacing:-0.2px">Hour</div>
<div class="a" style="left:945px;top:548px;color:#e6e6e6;font-size:10px">In</div>
<div class="a" style="left:780px;top:577px;width:122px;height:53px;background:#2e2e2e;border:2px solid #070707;border-radius:7px;overflow:hidden"><div class="a" style="left:0;top:0;width:100%;height:31px;background:linear-gradient(90deg,#34463f 0%,#354640 45%,#2f3331 100%)"></div></div>
<div class="a" style="left:789px;top:582px;color:#a0a8a0;font-size:8px;font-style:italic">Value</div>
<div class="a" style="left:789px;top:593px;color:#f4f4f4;font-size:11px;font-weight:bold;letter-spacing:-0.2px">Value 16</div>
<div class="a" style="left:877px;top:615px;color:#e6e6e6;font-size:10px;letter-spacing:-0.3px">Out</div>
<div class="a" style="left:782px;top:644px;width:122px;height:53px;background:#2e2e2e;border:2px solid #070707;border-radius:7px;overflow:hidden"><div class="a" style="left:0;top:0;width:100%;height:31px;background:linear-gradient(90deg,#34463f 0%,#354640 45%,#2f3331 100%)"></div></div>
<div class="a" style="left:791px;top:649px;color:#a0a8a0;font-size:8px;font-style:italic">Mul</div>
<div class="a" style="left:791px;top:660px;color:#f4f4f4;font-size:11px;font-weight:bold;letter-spacing:-0.2px">Mul 15</div>
<div class="a" style="left:793px;top:682px;color:#e6e6e6;font-size:10px">In</div>
<div class="a" style="left:879px;top:682px;color:#e6e6e6;font-size:10px;letter-spacing:-0.3px">Out</div>
<div class="a" style="left:929px;top:646px;width:122px;height:53px;background:#2e2e2e;border:2px solid #070707;border-radius:7px;overflow:hidden"><div class="a" style="left:0;top:0;width:100%;height:31px;background:linear-gradient(90deg,#3b82f0 0%,#3a78d8 40%,#2c3a55 100%)"></div></div>
<div class="a" style="left:938px;top:651px;color:#a0a8a0;font-size:8px;font-style:italic">Output</div>
<div class="a" style="left:938px;top:662px;color:#f4f4f4;font-size:11px;font-weight:bold;letter-spacing:-0.2px">Minute</div>
<div class="a" style="left:940px;top:684px;color:#e6e6e6;font-size:10px">In</div>
<div class="a" style="left:577px;top:643px;width:122px;height:53px;background:#2e2e2e;border:2px solid #070707;border-radius:7px;overflow:hidden"><div class="a" style="left:0;top:0;width:100%;height:31px;background:linear-gradient(90deg,#5a3050 0%,#4c2e45 50%,#302c2f 100%)"></div></div>
<div class="a" style="left:586px;top:648px;color:#a0a8a0;font-size:8px;font-style:italic">Input</div>
<div class="a" style="left:586px;top:659px;color:#f4f4f4;font-size:11px;font-weight:bold;letter-spacing:-0.2px">TimeOfDay</div>
<div class="a" style="left:674px;top:681px;color:#e6e6e6;font-size:10px;letter-spacing:-0.3px">Out</div>
<div class="a" style="left:783px;top:727px;width:122px;height:53px;background:#2e2e2e;border:2px solid #070707;border-radius:7px;overflow:hidden"><div class="a" style="left:0;top:0;width:100%;height:31px;background:linear-gradient(90deg,#34463f 0%,#354640 45%,#2f3331 100%)"></div></div>
<div class="a" style="left:792px;top:732px;color:#a0a8a0;font-size:8px;font-style:italic">Value</div>
<div class="a" style="left:792px;top:743px;color:#f4f4f4;font-size:11px;font-weight:bold;letter-spacing:-0.2px">Value 10</div>
<div class="a" style="left:880px;top:765px;color:#e6e6e6;font-size:10px;letter-spacing:-0.3px">Out</div>
<div class="a" style="left:780px;top:800px;width:122px;height:53px;background:#2e2e2e;border:2px solid #070707;border-radius:7px;overflow:hidden"><div class="a" style="left:0;top:0;width:100%;height:31px;background:linear-gradient(90deg,#34463f 0%,#354640 45%,#2f3331 100%)"></div></div>
<div class="a" style="left:789px;top:805px;color:#a0a8a0;font-size:8px;font-style:italic">Mul</div>
<div class="a" style="left:789px;top:816px;color:#f4f4f4;font-size:11px;font-weight:bold;letter-spacing:-0.2px">Mul 7</div>
<div class="a" style="left:791px;top:838px;color:#e6e6e6;font-size:10px">In</div>
<div class="a" style="left:877px;top:838px;color:#e6e6e6;font-size:10px;letter-spacing:-0.3px">Out</div>
<div class="a" style="left:929px;top:790px;width:122px;height:53px;background:#2e2e2e;border:2px solid #070707;border-radius:7px;overflow:hidden"><div class="a" style="left:0;top:0;width:100%;height:31px;background:linear-gradient(90deg,#3b82f0 0%,#3a78d8 40%,#2c3a55 100%)"></div></div>
<div class="a" style="left:938px;top:795px;color:#a0a8a0;font-size:8px;font-style:italic">Output</div>
<div class="a" style="left:938px;top:806px;color:#f4f4f4;font-size:11px;font-weight:bold;letter-spacing:-0.2px">Second</div>
<div class="a" style="left:940px;top:828px;color:#e6e6e6;font-size:10px">In</div>
<svg class="a" style="left:0;top:0" width="1248" height="972"><path d="M902,472 C982,472 702,552 782,552" fill="none" stroke="#8a9890" stroke-opacity="0.25" stroke-width="1.5"/><path d="M901,619 C981,619 703,687 783,687" fill="none" stroke="#8a9890" stroke-opacity="0.25" stroke-width="1.5"/><path d="M905,770 C985,770 702,842 782,842" fill="none" stroke="#8a9890" stroke-opacity="0.25" stroke-width="1.5"/><circle cx="902" cy="472" r="4" fill="#dcdcdc" stroke="#151515" stroke-width="1"/><circle cx="782" cy="552" r="4" fill="#dcdcdc" stroke="#151515" stroke-width="1"/><circle cx="901" cy="552" r="4" fill="#dcdcdc" stroke="#151515" stroke-width="1"/><circle cx="935" cy="552" r="4" fill="#dcdcdc" stroke="#151515" stroke-width="1"/><circle cx="901" cy="619" r="4" fill="#dcdcdc" stroke="#151515" stroke-width="1"/><circle cx="783" cy="687" r="4" fill="#dcdcdc" stroke="#151515" stroke-width="1"/><circle cx="902" cy="687" r="4" fill="#dcdcdc" stroke="#151515" stroke-width="1"/><circle cx="930" cy="688" r="4" fill="#dcdcdc" stroke="#151515" stroke-width="1"/><circle cx="698" cy="686" r="4" fill="#dcdcdc" stroke="#151515" stroke-width="1"/><circle cx="905" cy="770" r="4" fill="#dcdcdc" stroke="#151515" stroke-width="1"/><circle cx="782" cy="842" r="4" fill="#dcdcdc" stroke="#151515" stroke-width="1"/><circle cx="901" cy="842" r="4" fill="#dcdcdc" stroke="#151515" stroke-width="1"/><circle cx="930" cy="832" r="4" fill="#dcdcdc" stroke="#151515" stroke-width="1"/></svg>
<div class="a" style="left:6px;top:987px;width:1908px;height:21px;background:#1f2024"></div>
<div class="a" style="left:14px;top:991px;font-weight:bold;color:#f0f0f0;font-size:12px;letter-spacing:-0.4px">Log Console</div>
<svg class="a" style="left:1887px;top:992px" width="26" height="12"><rect x="0.5" y="0.5" width="10" height="10" rx="2" fill="none" stroke="#55575c"/><rect x="3" y="4" width="4" height="4" fill="none" stroke="#55575c"/><path d="M4.5,2.5 H8.5 V6.5" fill="none" stroke="#55575c"/><rect x="14.5" y="0.5" width="10" height="10" rx="2" fill="none" stroke="#55575c"/><path d="M17,3 L22,8 M22,3 L17,8" stroke="#606268" stroke-width="1.6"/></svg>
<div class="a" style="left:6px;top:1008px;width:1908px;height:161px;background:#3e3f43"></div>
<div class="a" style="left:11px;top:1014px;width:220px;height:22px;background:#232323;border-radius:4px;border-top:1px solid #1a1a1a"></div>
<div class="a" style="left:16px;top:1019px;color:#8a8a8a;font-size:12px">Search</div>
<div class="a" style="left:236px;top:1015px;width:78px;height:21px;background:#46484c;border:1px solid #36383b;border-radius:4px;color:#dadada;font-size:12px;line-height:19px;text-align:center;white-space:nowrap;letter-spacing:-0.5px">Clear Console</div>
<div class="a" style="left:11px;top:1042px;width:1899px;height:123px;background:#232323"></div>
<div class="a" style="left:1749px;top:1015px;width:38px;height:21px;background:#444548;border:1px solid #36373a;border-radius:5px"></div>
<div class="a" style="left:1794px;top:1015px;width:38px;height:21px;background:#444548;border:1px solid #36373a;border-radius:5px"></div>
<div class="a" style="left:1839px;top:1015px;width:38px;height:21px;background:#444548;border:1px solid #36373a;border-radius:5px"></div>
<div class="a" style="left:1882px;top:1015px;width:27px;height:21px;background:#393c41;border:1px solid #2a2b2e;border-radius:3px"></div>
<svg class="a" style="left:1740px;top:1012px" width="179" height="28"><circle cx="20.5" cy="13.5" r="6.5" fill="#e8303a"/><path d="M17.8,10.8 L23.2,16.2 M23.2,10.8 L17.8,16.2" stroke="#fff" stroke-width="1.5"/><path d="M65,7 L71.5,18.5 H58.5 Z" fill="#f5b400"/><rect x="64.3" y="10.5" width="1.4" height="4.5" fill="#222"/><rect x="64.3" y="16" width="1.4" height="1.4" fill="#222"/><circle cx="110.5" cy="13.5" r="6.5" fill="#4aa3f0"/><rect x="109.8" y="12" width="1.5" height="5" fill="#fff"/><rect x="109.8" y="9.5" width="1.5" height="1.5" fill="#fff"/><path d="M148,8 H160 L156,13 V19 L152,17 V13 Z" fill="#d8d8d8"/></svg>
<div class="a" style="left:1769px;top:1019px;color:#d0d0d0;font-size:11px">0</div>
<div class="a" style="left:1814px;top:1019px;color:#d0d0d0;font-size:11px">0</div>
<div class="a" style="left:1859px;top:1019px;color:#d0d0d0;font-size:11px">0</div>
<div class="a" style="left:2px;top:1169px;width:1917px;height:26px;background:#303030"></div>
<div class="a" style="left:0;top:1195px;width:1919px;height:4px;background:#1b202a"></div>
<div class="a" style="left:1915px;top:33px;width:3px;height:1166px;background:#2c2c2c"></div>
<div class="a" style="left:1918px;top:33px;width:1px;height:1166px;background:#1b202a"></div>
</body></html>
